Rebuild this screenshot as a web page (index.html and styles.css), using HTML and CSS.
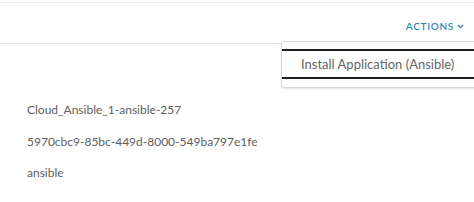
FILE: index.html
```html
<!DOCTYPE html>
<html>
<head>
<meta charset="utf-8">
<link rel="stylesheet" href="styles.css">
</head>
<body>
<div class="page">
  <div class="topbar"></div>
  <div class="toolbar">
    <button class="actions">ACTIONS
      <svg class="chev" width="7" height="5" viewBox="0 0 7 5"><path d="M0.8 1 L3.5 3.6 L6.2 1" fill="none" stroke="#2f87b5" stroke-width="1.2"/></svg>
    </button>
  </div>
  <div class="menu">
    <div class="menu-item">Install Application (Ansible)</div>
  </div>
  <div class="details">
    <div class="row">Cloud_Ansible_1-ansible-257</div>
    <div class="row">5970cbc9-85bc-449d-8000-549ba797e1fe</div>
    <div class="row">ansible</div>
  </div>
</div>
</body>
</html>
```
FILE: styles.css
```css
html, body {
  margin: 0;
  padding: 0;
  background: #fff;
}
.page {
  position: relative;
  width: 474px;
  height: 202px;
  overflow: hidden;
  font-family: Lato, "Open Sans", sans-serif;
}
.topbar {
  height: 2px;
  border-bottom: 1px solid #ececec;
}
.toolbar {
  height: 41px;
  box-sizing: border-box;
  border-bottom: 1px solid #e6e6e6;
  display: flex;
  justify-content: flex-end;
  align-items: center;
  padding-right: 10px;
}
.actions {
  background: none;
  border: none;
  padding: 0;
  margin-top: 6px;
  font-family: Lato, sans-serif;
  font-size: 10px;
  font-weight: 600;
  letter-spacing: 0.7px;
  color: #2f87b5;
  display: flex;
  align-items: center;
  gap: 3px;
}
.menu {
  position: absolute;
  top: 41px;
  left: 281px;
  width: 220px;
  height: 47px;
  box-sizing: border-box;
  border: 1px solid #d9d9d9;
  border-radius: 3px;
  box-shadow: 0 1px 2px rgba(0,0,0,0.1);
  background: #fff;
  padding-top: 7px;
}
.menu-item {
  height: 30px;
  box-sizing: border-box;
  border-top: 2px solid #1e1e1e;
  border-bottom: 2px solid #1e1e1e;
  display: flex;
  align-items: center;
  padding-left: 19px;
  font-size: 13px;
  color: #666;
}
.details {
  padding: 59px 0 0 27px;
  display: flex;
  flex-direction: column;
  gap: 17px;
}
.row {
  font-size: 12px;
  line-height: 14.5px;
  color: #5e5e5e;
}
```
